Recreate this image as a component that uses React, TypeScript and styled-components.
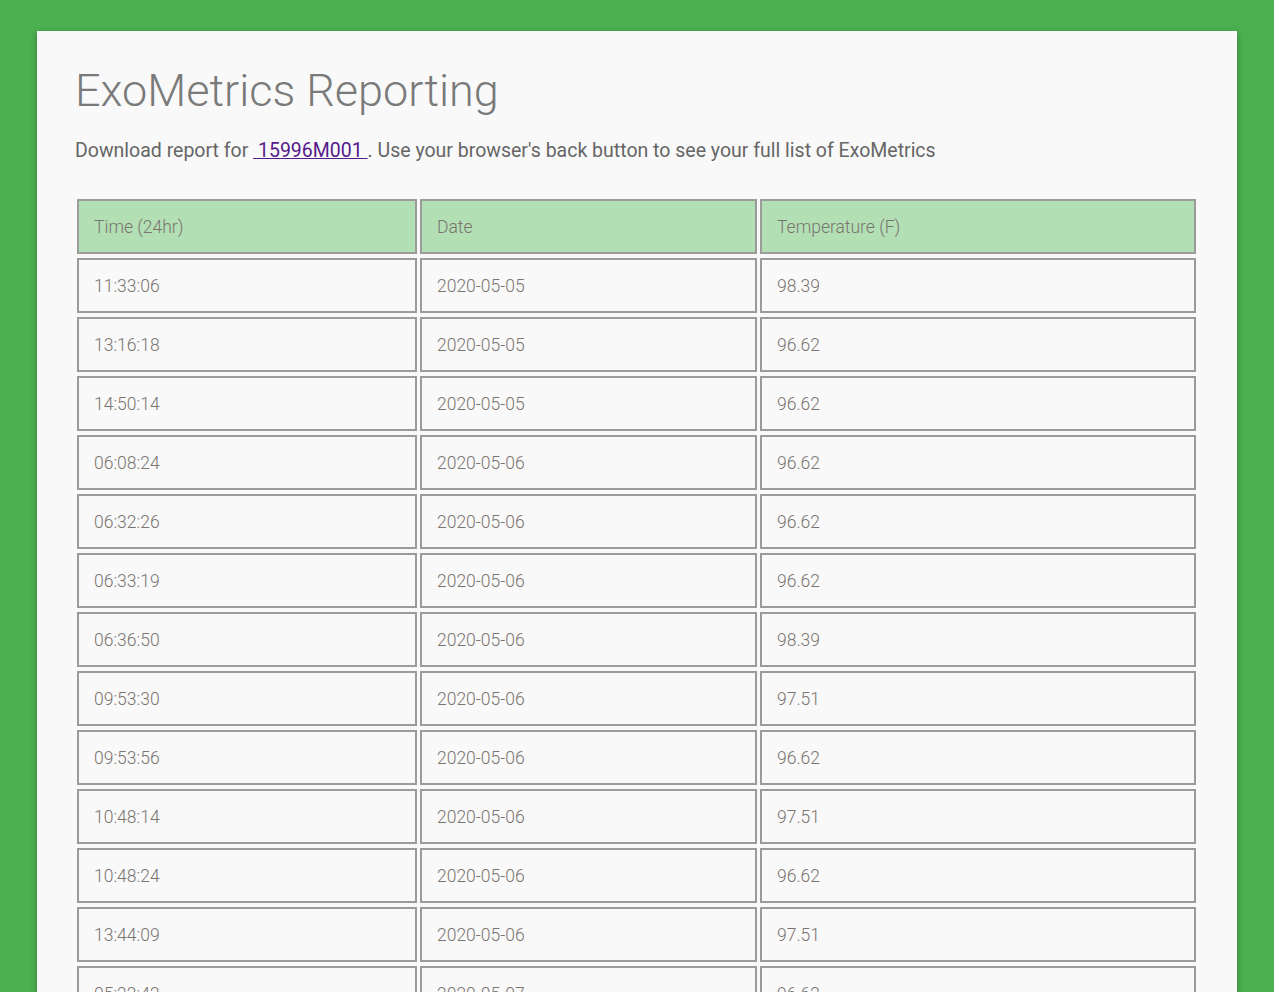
import React from "react"
import styled, { createGlobalStyle } from "styled-components"

const Global = createGlobalStyle`
  body {
    margin: 0;
    background: #4caf50;
    font-family: Roboto, "Liberation Sans", sans-serif;
  }
`

const Page = styled.div`
  padding: 31px 37px 0 37px;
`

const Card = styled.div`
  background: #f9f9f9;
  padding: 30px 38px 40px 38px;
  box-shadow: 0 2px 6px rgba(0, 0, 0, 0.3);
`

const Title = styled.h1`
  margin: 0;
  font-weight: 300;
  font-size: 45px;
  line-height: 60px;
  color: #7a7a7a;
`

const Intro = styled.p`
  margin: 18px 0 33px 0;
  font-size: 19.5px;
  color: #666;
`

const ReportLink = styled.a`
  color: #551a8b;
`

const Table = styled.table`
  border-collapse: separate;
  border-spacing: 3px 4px;
  width: 1125px;
  margin-left: -1px;
`

const Cell = styled.td<{ $head?: boolean }>`
  border: 2px solid #9b9b9b;
  background: ${(p) => (p.$head ? "#b3dfb5" : "#f9f9f9")};
  height: 51px;
  padding: 0 15px;
  font-size: 17.5px;
  font-weight: 300;
  color: #7a7470;
  text-align: left;
`

const rows = [
  ["11:33:06", "2020-05-05", "98.39"],
  ["13:16:18", "2020-05-05", "96.62"],
  ["14:50:14", "2020-05-05", "96.62"],
  ["06:08:24", "2020-05-06", "96.62"],
  ["06:32:26", "2020-05-06", "96.62"],
  ["06:33:19", "2020-05-06", "96.62"],
  ["06:36:50", "2020-05-06", "98.39"],
  ["09:53:30", "2020-05-06", "97.51"],
  ["09:53:56", "2020-05-06", "96.62"],
  ["10:48:14", "2020-05-06", "97.51"],
  ["10:48:24", "2020-05-06", "96.62"],
  ["13:44:09", "2020-05-06", "97.51"],
  ["05:22:42", "2020-05-07", "96.62"],
  ["07:10:31", "2020-05-07", "97.51"],
]

export default function App() {
  return (
    <Page>
      <Global />
      <Card>
        <Title>ExoMetrics Reporting</Title>
        <Intro>
          Download report for <ReportLink href="#">{"\u00a015996M001\u00a0"}</ReportLink>. Use your
          browser's back button to see your full list of ExoMetrics
        </Intro>
        <Table>
          <colgroup>
            <col style={{ width: 340 }} />
            <col style={{ width: 337 }} />
            <col />
          </colgroup>
          <thead>
            <tr>
              <Cell as="th" $head>Time (24hr)</Cell>
              <Cell as="th" $head>Date</Cell>
              <Cell as="th" $head>Temperature (F)</Cell>
            </tr>
          </thead>
          <tbody>
            {rows.map((r, i) => (
              <tr key={i}>
                {r.map((v, j) => (
                  <Cell key={j}>{v}</Cell>
                ))}
              </tr>
            ))}
          </tbody>
        </Table>
      </Card>
    </Page>
  )
}
